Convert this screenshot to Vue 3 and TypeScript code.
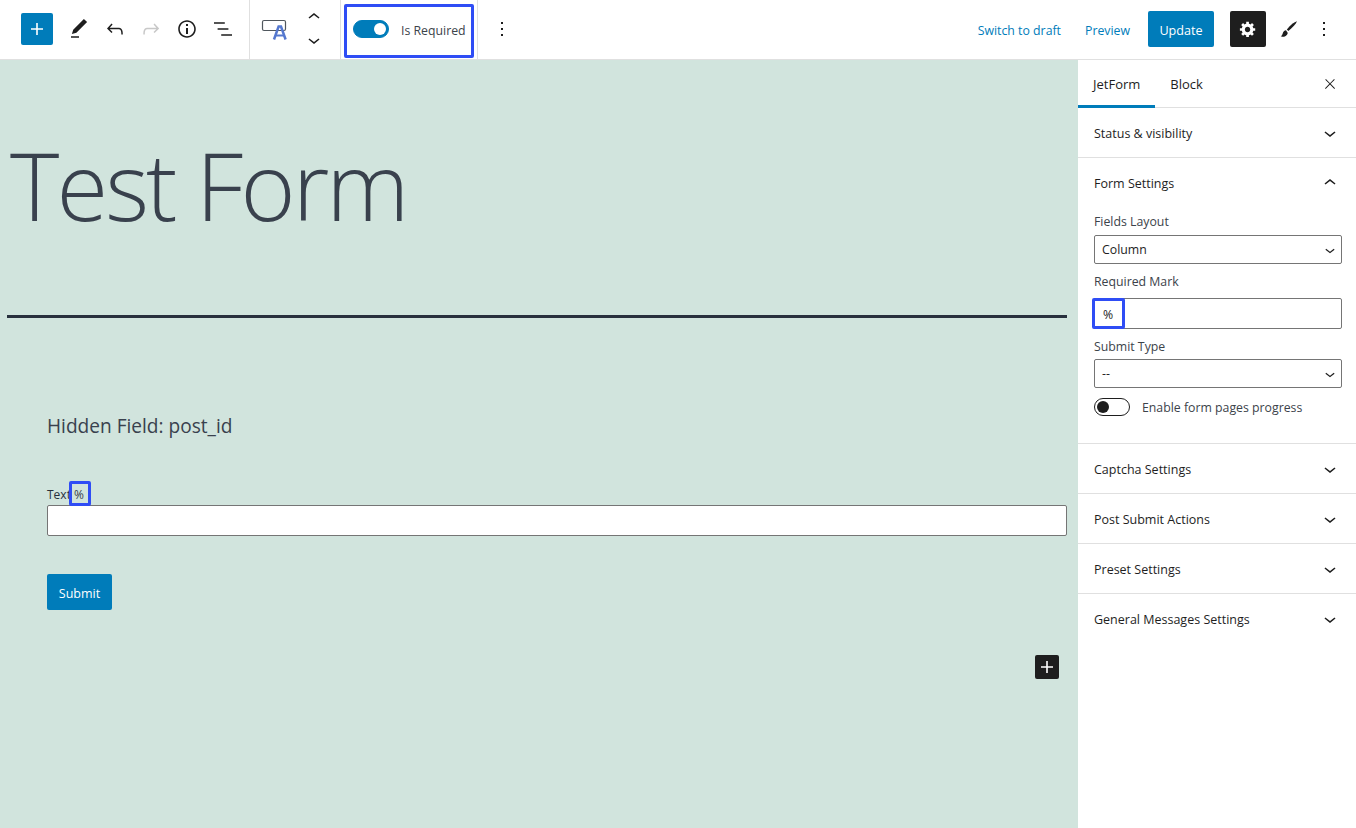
<script setup lang="ts">
const collapsedTop = ['Captcha Settings', 'Post Submit Actions', 'Preset Settings', 'General Messages Settings']
const down = 'M17.5 11.6L12 16l-5.5-4.4.9-1.2L12 14l4.5-3.6 1 1.2z'
const up = 'M6.5 12.4L12 8l5.5 4.4-.9 1.2L12 10l-4.5 3.6-1-1.2z'
const more = 'M13 19h-2v-2h2v2zm0-6h-2v-2h2v2zm0-6h-2V5h2v2z'
const plus = 'M18 11.2h-5.2V6h-1.6v5.2H6v1.6h5.2V18h1.6v-5.2H18z'
</script>

<template>
  <div class="editor">
    <header class="toolbar">
      <div class="tools">
        <button class="add"><svg viewBox="0 0 24 24" width="24" height="24"><path :d="plus" /></svg></button>
        <svg class="tool" viewBox="0 0 24 24" width="24" height="24"><path d="M20.1 5.1L16.9 2 6.2 12.7l-1.3 4.4 4.5-1.3L20.1 5.1zM4 20.8h8v-1.5H4v1.5z" /></svg>
        <svg class="tool" viewBox="0 0 24 24" width="24" height="24"><path d="M18.3 11.7c-.6-.6-1.4-.9-2.3-.9H6.7l2.9-3.3-1.1-1-4.5 5L8.5 16l1-1-2.7-2.7H16c.5 0 .9.2 1.3.5 1 1 1 3.4 1 4.5v.3h1.5v-.2c0-1.5 0-4.3-1.5-5.7z" /></svg>
        <svg class="tool off" viewBox="0 0 24 24" width="24" height="24"><path d="M15.6 6.5l-1.1 1 2.9 3.3H8c-.9 0-1.7.3-2.3.9-1.4 1.5-1.4 4.2-1.4 5.6v.2h1.5v-.3c0-1.1 0-3.5 1-4.5.3-.3.7-.5 1.3-.5h9.2L14.5 15l1.1 1.1 4.6-4.6-4.6-5z" /></svg>
        <svg class="tool" viewBox="0 0 24 24" width="24" height="24"><path d="M12 3.2c-4.8 0-8.8 3.9-8.8 8.8 0 4.8 3.9 8.8 8.8 8.8 4.8 0 8.8-3.9 8.8-8.8 0-4.8-4-8.8-8.8-8.8zm0 16c-4 0-7.2-3.3-7.2-7.2C4.8 8 8 4.8 12 4.8s7.2 3.3 7.2 7.2c0 4-3.2 7.2-7.2 7.2zM11 17h2v-6h-2v6zm0-8h2V7h-2v2z" /></svg>
        <svg class="tool" viewBox="0 0 24 24" width="24" height="24"><path d="M13.8 5.2H3v1.5h10.8V5.2zm-3.6 12v1.5H21v-1.5H10.2zm7.2-6H6.6v1.5h10.8v-1.5z" /></svg>
      </div>
      <div class="block-group">
        <svg class="block-icon" viewBox="0 0 28 24" width="28" height="24">
          <rect x="1.5" y="3.5" width="23" height="10" rx="1.5" fill="none" stroke="#50575e" stroke-width="1.2" />
          <path d="M13 22.5l4.6-13h2.4l4.6 13" fill="none" stroke="#5578cf" stroke-width="2.5" />
          <path d="M15 18.5h8" stroke="#5578cf" stroke-width="2" />
        </svg>
        <div class="movers">
          <svg viewBox="0 0 24 24" width="24" height="24"><path :d="up" /></svg>
          <svg viewBox="0 0 24 24" width="24" height="24"><path :d="down" /></svg>
        </div>
      </div>
      <div class="required-group">
        <div class="required-box">
          <span class="toggle on"></span>
          <span class="required-label">Is Required</span>
        </div>
      </div>
      <svg class="tool block-more" viewBox="0 0 24 24" width="24" height="24"><path :d="more" /></svg>
      <div class="actions">
        <a class="link draft">Switch to draft</a>
        <a class="link preview">Preview</a>
        <button class="update">Update</button>
        <button class="settings"><svg viewBox="0 0 20 20" width="18" height="18"><path d="M18 12h-2.18c-.17.7-.44 1.35-.81 1.93l1.54 1.54-2.1 2.1-1.54-1.54c-.58.36-1.23.63-1.91.79V19H8v-2.18c-.68-.16-1.33-.43-1.91-.79l-1.54 1.54-2.12-2.12 1.54-1.54c-.36-.58-.63-1.23-.79-1.91H1V9.03h2.17c.16-.7.44-1.35.8-1.94L2.43 5.55l2.1-2.1 1.54 1.54c.58-.37 1.24-.64 1.93-.81V2h3v2.18c.68.16 1.33.43 1.91.79l1.54-1.54 2.12 2.12-1.54 1.54c.36.59.64 1.24.8 1.94H18V12zm-8.5 1.5c1.66 0 3-1.34 3-3s-1.34-3-3-3-3 1.34-3 3 1.34 3 3 3z" /></svg></button>
        <svg class="tool brush" viewBox="0 0 24 24" width="24" height="24">
          <path d="M21 4.2c-2.8.8-6.3 3.4-10.2 8.2l1.6 1.5c4.5-3.7 7.4-6.8 8.6-9.7z" />
          <path d="M10 13.3c-1.7.3-2.7 1.3-3.2 3-.3 1.1-.9 2.2-2 3.3 2.8.5 6.3-.3 7-3.7z" />
        </svg>
        <svg class="tool" viewBox="0 0 24 24" width="24" height="24"><path :d="more" /></svg>
      </div>
    </header>

    <div class="body">
      <main class="canvas">
        <h1 class="title">Test Form</h1>
        <hr class="rule" />
        <div class="form">
          <p class="hidden-field">Hidden Field: post_id</p>
          <label class="field-label">Text<span class="mark">%</span></label>
          <div class="text-input"></div>
          <button class="submit">Submit</button>
          <div class="inserter-row">
            <button class="inserter"><svg viewBox="0 0 24 24" width="24" height="24"><path :d="plus" /></svg></button>
          </div>
        </div>
      </main>

      <aside class="sidebar">
        <div class="tabs">
          <span class="tab active">JetForm</span>
          <span class="tab">Block</span>
          <svg class="close" viewBox="0 0 24 24" width="16" height="16"><path d="M13 11.8l6.1-6.3-1-1-6.1 6.2-6.1-6.2-1 1 6.1 6.3-6.5 6.7 1 1 6.5-6.6 6.5 6.6 1-1z" /></svg>
        </div>
        <section class="panel">
          <div class="panel-head"><span>Status &amp; visibility</span><svg viewBox="0 0 24 24" width="24" height="24"><path :d="down" /></svg></div>
        </section>
        <section class="panel open">
          <div class="panel-head"><span>Form Settings</span><svg viewBox="0 0 24 24" width="24" height="24"><path :d="up" /></svg></div>
          <div class="panel-body">
            <label class="lbl first">Fields Layout</label>
            <div class="select"><span>Column</span><svg viewBox="0 0 24 24" width="20" height="20"><path :d="down" /></svg></div>
            <label class="lbl">Required Mark</label>
            <div class="input"><span class="input-value">%</span><i class="input-mark"></i></div>
            <label class="lbl tight">Submit Type</label>
            <div class="select"><span>--</span><svg viewBox="0 0 24 24" width="20" height="20"><path :d="down" /></svg></div>
            <div class="progress"><span class="toggle"></span><span>Enable form pages progress</span></div>
          </div>
        </section>
        <section v-for="name in collapsedTop" :key="name" class="panel">
          <div class="panel-head"><span>{{ name }}</span><svg viewBox="0 0 24 24" width="24" height="24"><path :d="down" /></svg></div>
        </section>
      </aside>
    </div>
  </div>
</template>

<style>
html, body { margin: 0; background: #fff; }
</style>

<style scoped>
* { box-sizing: border-box; }
.editor {
  width: 1356px;
  height: 828px;
  overflow: hidden;
  display: flex;
  flex-direction: column;
  font-family: "Open Sans", "Noto Sans", sans-serif;
  font-size: 13px;
  color: #1e1e1e;
}
svg { fill: #1e1e1e; display: block; }
button { border: 0; padding: 0; font-family: inherit; }
.toolbar {
  height: 60px;
  flex: none;
  display: flex;
  align-items: stretch;
  border-bottom: 1px solid #e0e0e0;
  background: #fff;
}
.tools {
  width: 250px;
  padding: 0 0 1px 21px;
  display: flex;
  align-items: center;
  gap: 12px;
  border-right: 1px solid #e0e0e0;
}
.add {
  width: 32px;
  height: 32px;
  margin-right: 2px;
  border-radius: 2px;
  background: #007cba;
  display: flex;
  align-items: center;
  justify-content: center;
}
.add svg { fill: #fff; }
.off { fill: #c8c8c8; }
.block-group {
  width: 91px;
  padding-left: 11px;
  padding-bottom: 1px;
  display: flex;
  align-items: center;
  border-right: 1px solid #e0e0e0;
}
.block-icon { margin-right: 13px; }
.movers { display: flex; flex-direction: column; margin-top: -1px; }
.movers svg + svg { margin-top: -1px; }
.required-group {
  width: 137px;
  padding: 4px 3px 1px;
  border-right: 1px solid #e0e0e0;
}
.required-box {
  height: 54px;
  border: 3px solid #2f4df5;
  border-radius: 2px;
  padding: 0 0 4px 6px;
  display: flex;
  align-items: center;
  gap: 12px;
}
.required-label { font-size: 12.3px; color: #3c434a; margin-top: 2px; }
.toggle {
  display: block;
  position: relative;
  flex: none;
  width: 36px;
  height: 18px;
  border: 1px solid #1e1e1e;
  border-radius: 9px;
  background: #fff;
}
.toggle::after {
  content: "";
  position: absolute;
  left: 2px;
  top: 2px;
  width: 12px;
  height: 12px;
  border-radius: 50%;
  background: #1e1e1e;
}
.toggle.on { background: #007cba; border-color: #007cba; }
.toggle.on::after { left: 20px; background: #fff; }
.block-more { align-self: center; margin: 0 0 1px 12px; }
.actions {
  margin-left: auto;
  display: flex;
  align-items: center;
  padding: 0 20px 1px 0;
}
.link { color: #007cba; font-size: 12.3px; margin-top: 2px; }
.draft { margin-right: 24px; }
.preview { margin-right: 18px; }
.update {
  width: 66px;
  height: 36px;
  padding-top: 2px;
  border-radius: 2px;
  background: #007cba;
  color: #fff;
  font-size: 12.6px;
  margin-right: 16px;
}
.settings {
  width: 36px;
  height: 36px;
  border-radius: 2px;
  background: #1e1e1e;
  display: flex;
  align-items: center;
  justify-content: center;
  margin-right: 10px;
}
.settings svg { fill: #fff; }
.brush { margin-right: 12px; }
.body { flex: 1; display: flex; min-height: 0; }
.canvas { width: 1078px; background: #d1e4dd; color: #39414d; position: relative; }
.title {
  margin: 0;
  padding: 63px 0 0 10px;
  font-size: 94px;
  line-height: 125px;
  font-weight: 300;
  letter-spacing: -2.9px;
  color: #39414d;
}
.rule {
  margin: 67px 11px 0 7px;
  height: 3px;
  border: 0;
  background: #28303d;
}
.form { padding: 95px 11px 0 47px; }
.hidden-field { margin: 0; font-size: 19.1px; line-height: 26px; color: #39414d; }
.field-label { display: block; margin-top: 44px; font-size: 12px; line-height: 24px; height: 22px; color: #28303d; }
.mark {
  display: inline-block;
  height: 25px;
  line-height: 21px;
  padding: 0 4px 0 2px;
  margin-left: -2px;
  border: 3px solid #2f4df5;
  border-radius: 2px;
  vertical-align: top;
  margin-top: -2px;
  position: relative;
  color: #39414d;
}
.text-input {
  height: 31px;
  background: #fff;
  border: 1px solid #757575;
  border-radius: 2px;
}
.submit {
  display: block;
  width: 65px;
  height: 36px;
  margin-top: 38px;
  padding-top: 2px;
  border-radius: 2px;
  background: #007cba;
  color: #fff;
  font-size: 12.5px;
}
.inserter-row { display: flex; justify-content: flex-end; margin-top: 45px; }
.inserter {
  width: 24px;
  height: 24px;
  margin-right: 8px;
  border-radius: 2px;
  background: #1e1e1e;
}
.inserter svg { fill: #fff; }
.sidebar { width: 278px; background: #fff; }
.tabs {
  height: 48px;
  display: flex;
  align-items: center;
  position: relative;
  border-bottom: 1px solid #e0e0e0;
}
.tab {
  height: 48px;
  line-height: 48px;
  padding: 0 15px;
  font-weight: 500;
  font-size: 13px;
  position: relative;
}
.tab.active::after {
  content: "";
  position: absolute;
  left: 0;
  right: 0;
  bottom: 0;
  height: 3px;
  background: #007cba;
}
.close { margin-left: auto; margin-right: 18px; }
.panel { border-bottom: 1px solid #e0e0e0; }
.panel:last-child { border-bottom: 0; }
.panel-head {
  height: 49px;
  padding: 0 14px 0 16px;
  display: flex;
  align-items: center;
  justify-content: space-between;
  font-weight: 530;
  font-size: 12.5px;
}
.panel-head span { margin-top: 2px; }
.panel-body { padding: 0 14px 27px 16px; }
.lbl { display: block; font-size: 12.3px; line-height: 18px; color: #3c434a; margin: 9px 0 7px; }
.lbl.first { margin-top: 6px; margin-bottom: 4px; }
.lbl.tight { margin-bottom: 3px; }
.select, .input {
  position: relative;
  display: flex;
  align-items: center;
  justify-content: space-between;
  border: 1px solid #757575;
  border-radius: 2px;
  padding: 0 1px 0 7px;
  background: #fff;
  font-size: 12.3px;
}
.select { height: 29px; }
.input { height: 31px; padding-left: 8px; }
.input-value { margin-top: 2px; }
.input-mark {
  position: absolute;
  left: -3px;
  top: -1px;
  width: 33px;
  height: 31px;
  border: 3px solid #2f4df5;
  border-radius: 2px;
}
.progress { display: flex; align-items: center; gap: 12px; margin-top: 10px; font-size: 12.3px; color: #3c434a; }
</style>
